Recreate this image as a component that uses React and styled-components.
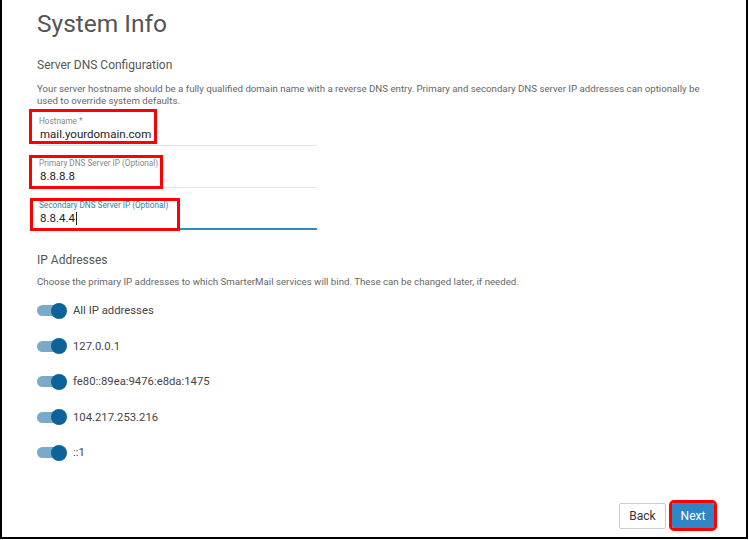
import React from "react";
import styled, { createGlobalStyle } from "styled-components";

const Global = createGlobalStyle`
  html, body { margin: 0; padding: 0; background: #fff; }
  body { font-family: Roboto, "Liberation Sans", Arial, sans-serif; }
`;

const Frame = styled.div`
  box-sizing: border-box;
  width: 748px;
  height: 539px;
  border: 2px solid #000;
  border-top: none;
  background: #fff;
  display: flex;
  flex-direction: column;
  padding: 0 32px 0 35px;
`;

const Title = styled.h1`
  margin: 9px 0 0;
  font-size: 24.5px;
  line-height: 30px;
  font-weight: 400;
  color: #555;
`;

const SectionTitle = styled.h2`
  margin: ${(p) => p.$top}px 0 0;
  font-size: 12px;
  line-height: 16px;
  font-weight: 400;
  color: #555;
`;

const Desc = styled.p`
  margin: ${(p) => p.$top}px 0 0;
  font-size: 9.7px;
  line-height: 12px;
  color: #666;
`;

const Fields = styled.div`
  display: flex;
  flex-direction: column;
  gap: 7px;
  margin-top: 4px;
`;

const Field = styled.div`
  position: relative;
  box-sizing: border-box;
  width: 280px;
  height: 35px;
  padding: 5px 0 0 2px;
  border-bottom: ${(p) => (p.$focused ? "2px solid #2b8cc4" : "1px solid #e4e4e4")};
`;

const Label = styled.div`
  font-size: 8.2px;
  line-height: 10px;
  color: ${(p) => (p.$focused ? "#2b7fb8" : "#888")};
`;

const Value = styled.div`
  font-size: 11.5px;
  line-height: 16px;
  color: #222;
  padding-left: 1px;
  display: flex;
  align-items: center;
`;

const Caret = styled.span`
  display: inline-block;
  width: 1px;
  height: 13px;
  background: #222;
  margin-left: 1px;
`;

const Highlight = styled.div`
  position: absolute;
  box-sizing: border-box;
  border: 3px solid #f00;
  left: ${(p) => p.$left}px;
  top: ${(p) => p.$top}px;
  width: ${(p) => p.$w}px;
  height: ${(p) => p.$h}px;
  pointer-events: none;
`;

const ToggleList = styled.div`
  margin-top: 5px;
  display: flex;
  flex-direction: column;
`;

const ToggleRow = styled.div`
  height: 35.5px;
  display: flex;
  align-items: center;
  gap: 6px;
`;

const Switch = styled.span`
  position: relative;
  width: 30px;
  height: 16px;
  flex: none;
  &::before {
    content: "";
    position: absolute;
    left: 0;
    top: 2.5px;
    width: 25px;
    height: 11px;
    border-radius: 6px;
    background: #79abc9;
  }
  &::after {
    content: "";
    position: absolute;
    right: 0;
    top: 0;
    width: 16px;
    height: 16px;
    border-radius: 50%;
    background: #0d6399;
  }
`;

const ToggleLabel = styled.span`
  font-size: 11.3px;
  color: #444;
`;

const Footer = styled.div`
  margin-top: auto;
  margin-bottom: 8px;
  display: flex;
  justify-content: flex-end;
  gap: 6px;
`;

const Button = styled.button`
  box-sizing: border-box;
  height: ${(p) => (p.$primary ? 25 : 26)}px;
  width: ${(p) => (p.$primary ? 42 : 47)}px;
  margin-bottom: ${(p) => (p.$primary ? 1 : 0)}px;
  padding: 0;
  font-family: Roboto, "Liberation Sans", Arial, sans-serif;
  font-size: 12px;
  border-radius: 2px;
  border: 1px solid ${(p) => (p.$primary ? "#2f86c6" : "#ccc")};
  background: ${(p) => (p.$primary ? "#2f86c6" : "#fff")};
  color: ${(p) => (p.$primary ? "#fff" : "#333")};
  outline: ${(p) => (p.$primary ? "3px solid #f00" : "none")};
  outline-offset: 0;
`;

const ips = [
  "All IP addresses",
  "127.0.0.1",
  "fe80::89ea:9476:e8da:1475",
  "104.217.253.216",
  "::1",
];

export default function App() {
  return (
    <>
      <Global />
      <Frame>
        <Title>System Info</Title>
        <SectionTitle $top={18}>Server DNS Configuration</SectionTitle>
        <Desc $top={10}>
          Your server hostname should be a fully qualified domain name with a reverse DNS entry. Primary and secondary DNS server IP addresses can optionally be used to override system defaults.
        </Desc>
        <Fields>
          <Field>
            <Label>Hostname *</Label>
            <Value>mail.yourdomain.com</Value>
            <Highlight $left={-8} $top={-2} $w={128} $h={35} />
          </Field>
          <Field>
            <Label>Primary DNS Server IP (Optional)</Label>
            <Value>8.8.8.8</Value>
            <Highlight $left={-8} $top={2} $w={134} $h={34} />
          </Field>
          <Field $focused>
            <Label $focused>Secondary DNS Server IP (Optional)</Label>
            <Value>
              8.8.4.4<Caret />
            </Value>
            <Highlight $left={-7} $top={3} $w={150} $h={33} />
          </Field>
        </Fields>
        <SectionTitle $top={22}>IP Addresses</SectionTitle>
        <Desc $top={8}>
          Choose the primary IP addresses to which SmarterMail services will bind. These can be changed later, if needed.
        </Desc>
        <ToggleList>
          {ips.map((ip) => (
            <ToggleRow key={ip}>
              <Switch />
              <ToggleLabel>{ip}</ToggleLabel>
            </ToggleRow>
          ))}
        </ToggleList>
        <Footer>
          <Button>Back</Button>
          <Button $primary>Next</Button>
        </Footer>
      </Frame>
    </>
  );
}
